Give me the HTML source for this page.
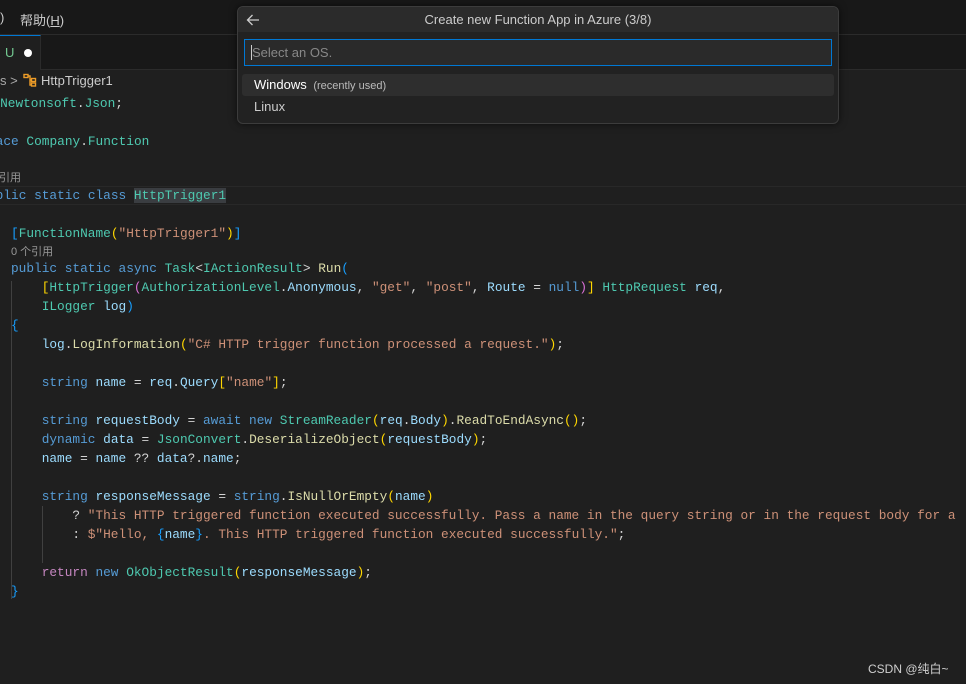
<!DOCTYPE html>
<html><head><meta charset="utf-8"><style>
*{margin:0;padding:0;box-sizing:border-box}
body{width:966px;height:684px;background:#1f1f1f;overflow:hidden;position:relative;font-family:"Liberation Sans","Noto Sans CJK SC",sans-serif}
.title{position:absolute;left:0;top:0;width:966px;height:35px;background:#181818;border-bottom:1px solid #2b2b2b}
.title span{position:absolute;top:10px;font-size:13px;color:#cccccc}
.tabs{position:absolute;left:0;top:35px;width:966px;height:35px;background:#181818;border-bottom:1px solid #2b2b2b}
.tab{position:absolute;left:0;top:0;width:41px;height:35px;background:#1f1f1f;border-top:1px solid #0078d4;border-right:1px solid #2b2b2b}
.tab .u{position:absolute;left:5px;top:9px;color:#73c991;font-size:13px}
.tab .dot{position:absolute;left:24px;top:13px;width:8px;height:8px;border-radius:50%;background:#fff}
.bc{position:absolute;top:73px;font-size:13px;color:#a9a9a9}
.code{font-family:"Liberation Mono",monospace;font-size:12.8px;white-space:pre;color:#9cdcfe}
.l{position:absolute;height:19px;line-height:19px}
.lens{position:absolute;font-size:11px;color:#999;line-height:14px}
.k{color:#569cd6}.t{color:#4ec9b0}.s{color:#ce9178}.v{color:#9cdcfe}.m{color:#dcdcaa}.c{color:#c586c0}.w{color:#d4d4d4}
.y{color:#ffd700}.p{color:#da70d6}.b{color:#179fff}
.guide{position:absolute;width:1px;background:#404040}
.qp{position:absolute;left:237px;top:6px;width:602px;height:118px;background:#222222;border:1px solid #3c3c3c;border-radius:6px;box-shadow:0 0 8px rgba(0,0,0,.6);overflow:hidden}
.qph{position:absolute;left:0;top:0;width:100%;height:25px;background:#2b2b2b;color:#cccccc;font-size:13px;text-align:center;line-height:26px}
.inp{position:absolute;left:6px;top:32px;width:588px;height:27px;border:1px solid #0078d4;background:#2a2a2a;color:#888;font-size:13px;line-height:25px;padding-left:6px}
.row{position:absolute;left:4px;width:592px;height:22px;line-height:22px;font-size:13px;color:#ccc;padding-left:12px;border-radius:3px}
</style></head><body>
<div class="title"><span style="left:0">)</span><span style="left:20px">帮助(<u>H</u>)</span></div>
<div class="tabs"><div class="tab"><span class="u">U</span><span class="dot"></span></div></div>
<div class="bc" style="left:0">s &gt;</div>
<svg style="position:absolute;left:23px;top:73px" width="14" height="14" viewBox="0 0 14 14" fill="none" stroke="#ee9d28" stroke-width="1.4"><rect x="1" y="1.5" width="4" height="3"/><rect x="8.5" y="5.5" width="4" height="3"/><rect x="8.5" y="10" width="4" height="3"/><path d="M5 3h2v9h1.5M7 7h1.5"/></svg>
<div class="bc" style="left:41px;color:#cccccc">HttpTrigger1</div>

<div style="position:absolute;left:0;top:186px;width:966px;height:19px;border-top:1px solid #282828;border-bottom:1px solid #282828"></div>
<div class="guide" style="left:11px;top:281px;height:318px"></div>
<div class="guide" style="left:42px;top:506px;height:57px"></div>

<div class="code">
<div class="l" style="left:-46px;top:94px"><span class="k">using</span> <span class="t">Newtonsoft</span><span class="w">.</span><span class="t">Json</span><span class="w">;</span></div>
<div class="l" style="left:-50.4px;top:132px"><span class="k">namespace</span> <span class="t">Company</span><span class="w">.</span><span class="t">Function</span></div>
<div class="lens" style="left:-12px;top:171px;font-family:'Liberation Sans','Noto Sans CJK SC',sans-serif">个引用</div>
<div class="l" style="left:-19.7px;top:186px"><span class="k">public static class</span> <span class="t" style="background:#3a3d41">HttpTrigger1</span></div>
<div class="l" style="left:11px;top:224px"><span class="b">[</span><span class="t">FunctionName</span><span class="y">(</span><span class="s">"HttpTrigger1"</span><span class="y">)</span><span class="b">]</span></div>
<div class="lens" style="left:11px;top:245px;font-family:'Liberation Sans','Noto Sans CJK SC',sans-serif">0 个引用</div>
<div class="l" style="left:11px;top:259px"><span class="k">public static async</span> <span class="t">Task</span><span class="w">&lt;</span><span class="t">IActionResult</span><span class="w">&gt;</span> <span class="m">Run</span><span class="b">(</span></div>
<div class="l" style="left:41.7px;top:278px"><span class="y">[</span><span class="t">HttpTrigger</span><span class="p">(</span><span class="t">AuthorizationLevel</span><span class="w">.</span><span class="v">Anonymous</span><span class="w">, </span><span class="s">"get"</span><span class="w">, </span><span class="s">"post"</span><span class="w">, </span><span class="v">Route</span><span class="w"> = </span><span class="k">null</span><span class="p">)</span><span class="y">]</span> <span class="t">HttpRequest</span> <span class="v">req</span><span class="w">,</span></div>
<div class="l" style="left:41.7px;top:297px"><span class="t">ILogger</span> <span class="v">log</span><span class="b">)</span></div>
<div class="l" style="left:11px;top:316px"><span class="b">{</span></div>
<div class="l" style="left:41.7px;top:335px"><span class="v">log</span><span class="w">.</span><span class="m">LogInformation</span><span class="y">(</span><span class="s">"C# HTTP trigger function processed a request."</span><span class="y">)</span><span class="w">;</span></div>
<div class="l" style="left:41.7px;top:373px"><span class="k">string</span> <span class="v">name</span><span class="w"> = </span><span class="v">req</span><span class="w">.</span><span class="v">Query</span><span class="y">[</span><span class="s">"name"</span><span class="y">]</span><span class="w">;</span></div>
<div class="l" style="left:41.7px;top:411px"><span class="k">string</span> <span class="v">requestBody</span><span class="w"> = </span><span class="k">await new</span> <span class="t">StreamReader</span><span class="y">(</span><span class="v">req</span><span class="w">.</span><span class="v">Body</span><span class="y">)</span><span class="w">.</span><span class="m">ReadToEndAsync</span><span class="y">()</span><span class="w">;</span></div>
<div class="l" style="left:41.7px;top:430px"><span class="k">dynamic</span> <span class="v">data</span><span class="w"> = </span><span class="t">JsonConvert</span><span class="w">.</span><span class="m">DeserializeObject</span><span class="y">(</span><span class="v">requestBody</span><span class="y">)</span><span class="w">;</span></div>
<div class="l" style="left:41.7px;top:449px"><span class="v">name</span><span class="w"> = </span><span class="v">name</span><span class="w"> ?? </span><span class="v">data</span><span class="w">?.</span><span class="v">name</span><span class="w">;</span></div>
<div class="l" style="left:41.7px;top:487px"><span class="k">string</span> <span class="v">responseMessage</span><span class="w"> = </span><span class="k">string</span><span class="w">.</span><span class="m">IsNullOrEmpty</span><span class="y">(</span><span class="v">name</span><span class="y">)</span></div>
<div class="l" style="left:72.4px;top:506px"><span class="w">? </span><span class="s">"This HTTP triggered function executed successfully. Pass a name in the query string or in the request body for a</span></div>
<div class="l" style="left:72.4px;top:525px"><span class="w">: </span><span class="s">$"Hello, </span><span class="b">{</span><span class="v">name</span><span class="b">}</span><span class="s">. This HTTP triggered function executed successfully."</span><span class="w">;</span></div>
<div class="l" style="left:41.7px;top:563px"><span class="c">return</span> <span class="k">new</span> <span class="t">OkObjectResult</span><span class="y">(</span><span class="v">responseMessage</span><span class="y">)</span><span class="w">;</span></div>
<div class="l" style="left:11px;top:582px"><span class="b">}</span></div>
</div>

<div class="qp">
<div class="qph">Create new Function App in Azure (3/8)</div>
<svg style="position:absolute;left:8px;top:6px" width="14" height="14" viewBox="0 0 14 14" fill="none" stroke="#cccccc" stroke-width="1.3"><path d="M13 7H1.5M6.5 2L1.5 7l5 5"/></svg>
<div class="inp"><span style="display:inline-block;width:1px;height:15px;background:#ccc;vertical-align:-3px"></span>Select an OS.</div>
<div class="row" style="top:67px;background:#2e2e2e;color:#fff">Windows <span style="font-size:11px;color:#bbb;margin-left:3px">(recently used)</span></div>
<div class="row" style="top:89px">Linux</div>
</div>

<div style="position:absolute;left:868px;top:660px;font-size:12px;color:#cfcfcf">CSDN @纯白~</div>
</body></html>
